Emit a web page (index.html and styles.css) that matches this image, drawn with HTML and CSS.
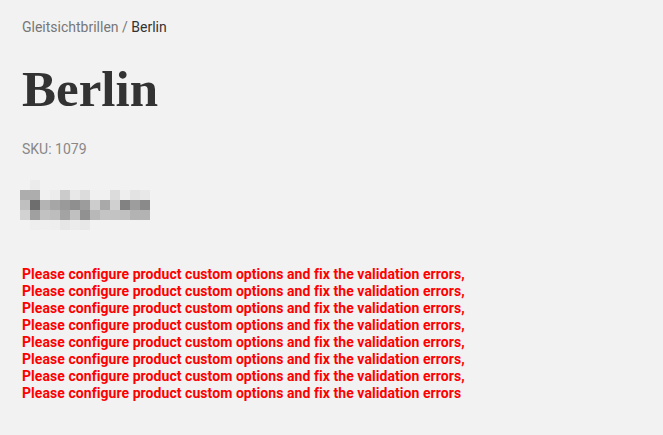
FILE: index.html
```html
<!DOCTYPE html>
<html lang="de">
<head>
    <meta charset="UTF-8">
    <title>Berlin</title>
    <link rel="stylesheet" href="styles.css">
</head>
<body>
    <div class="product">
        <p class="crumbs"><a href="#">Gleitsichtbrillen</a> / <span>Berlin</span></p>
        <h1 class="title">Berlin</h1>
        <p class="sku">SKU: 1079</p>
        <div class="thumb">
            <svg width="130" height="50" viewBox="0 0 130 50">
                <rect x="10" y="0" width="10" height="10" fill="#ebebeb"/>
                <rect x="0" y="10" width="10" height="10" fill="#adadad"/>
                <rect x="10" y="10" width="10" height="10" fill="#adadad"/>
                <rect x="20" y="10" width="10" height="10" fill="#f0f0f0"/>
                <rect x="30" y="10" width="10" height="10" fill="#ececec"/>
                <rect x="40" y="10" width="10" height="10" fill="#cbcbcb"/>
                <rect x="50" y="10" width="10" height="10" fill="#e8e8e8"/>
                <rect x="60" y="10" width="10" height="10" fill="#dcdcdc"/>
                <rect x="70" y="10" width="10" height="10" fill="#f0f0f0"/>
                <rect x="80" y="10" width="10" height="10" fill="#f0f0f0"/>
                <rect x="90" y="10" width="10" height="10" fill="#dcdcdc"/>
                <rect x="100" y="10" width="10" height="10" fill="#eeeeee"/>
                <rect x="110" y="10" width="10" height="10" fill="#e3e3e3"/>
                <rect x="120" y="10" width="10" height="10" fill="#e8e8e8"/>
                <rect x="0" y="20" width="10" height="10" fill="#c0c0c0"/>
                <rect x="10" y="20" width="10" height="10" fill="#6e6e6e"/>
                <rect x="20" y="20" width="10" height="10" fill="#b4b4b4"/>
                <rect x="30" y="20" width="10" height="10" fill="#a6a6a6"/>
                <rect x="40" y="20" width="10" height="10" fill="#9a9a9a"/>
                <rect x="50" y="20" width="10" height="10" fill="#8f8f8f"/>
                <rect x="60" y="20" width="10" height="10" fill="#9c9c9c"/>
                <rect x="70" y="20" width="10" height="10" fill="#cdcdcd"/>
                <rect x="80" y="20" width="10" height="10" fill="#a9a9a9"/>
                <rect x="90" y="20" width="10" height="10" fill="#d0d0d0"/>
                <rect x="100" y="20" width="10" height="10" fill="#828282"/>
                <rect x="110" y="20" width="10" height="10" fill="#9d9d9d"/>
                <rect x="120" y="20" width="10" height="10" fill="#8a8a8a"/>
                <rect x="0" y="30" width="10" height="10" fill="#d2d2d2"/>
                <rect x="10" y="30" width="10" height="10" fill="#a0a0a0"/>
                <rect x="20" y="30" width="10" height="10" fill="#c2c2c2"/>
                <rect x="30" y="30" width="10" height="10" fill="#bdbdbd"/>
                <rect x="40" y="30" width="10" height="10" fill="#a3a3a3"/>
                <rect x="50" y="30" width="10" height="10" fill="#c0c0c0"/>
                <rect x="60" y="30" width="10" height="10" fill="#919191"/>
                <rect x="70" y="30" width="10" height="10" fill="#b8b8b8"/>
                <rect x="80" y="30" width="10" height="10" fill="#c4c4c4"/>
                <rect x="90" y="30" width="10" height="10" fill="#c3c3c3"/>
                <rect x="100" y="30" width="10" height="10" fill="#c0c0c0"/>
                <rect x="110" y="30" width="10" height="10" fill="#b3b3b3"/>
                <rect x="120" y="30" width="10" height="10" fill="#b3b3b3"/>
                <rect x="10" y="40" width="10" height="10" fill="#eeeeee"/>
                <rect x="20" y="40" width="10" height="10" fill="#efefef"/>
                <rect x="30" y="40" width="10" height="10" fill="#eeeeee"/>
                <rect x="40" y="40" width="10" height="10" fill="#e6e6e6"/>
                <rect x="50" y="40" width="10" height="10" fill="#ececec"/>
                <rect x="60" y="40" width="10" height="10" fill="#e8e8e8"/>
            </svg>
        </div>
        <div class="errors">
            Please configure product custom options and fix the validation errors,<br>
            Please configure product custom options and fix the validation errors,<br>
            Please configure product custom options and fix the validation errors,<br>
            Please configure product custom options and fix the validation errors,<br>
            Please configure product custom options and fix the validation errors,<br>
            Please configure product custom options and fix the validation errors,<br>
            Please configure product custom options and fix the validation errors,<br>
            Please configure product custom options and fix the validation errors
        </div>
    </div>
</body>
</html>
```

FILE: styles.css
```css
*{
    margin: 0;
    padding: 0;
}
body{
    background: #f2f2f2;
    font-family: Roboto, "Liberation Sans", sans-serif;
    font-size: 14px;
    color: #333;
}
.product{
    padding: 17px 22px;
}
.crumbs{
    line-height: 20px;
    color: #777;
}
.crumbs a{
    color: #777;
    text-decoration: none;
}
.crumbs span{
    color: #333;
}
.title{
    margin-top: 21px;
    font-family: "Liberation Serif", "DejaVu Serif", serif;
    font-size: 51px;
    font-weight: bold;
    line-height: 62px;
    color: #333;
}
.sku{
    margin-top: 19px;
    line-height: 20px;
    color: #888;
}
.thumb{
    margin-top: 21px;
    margin-left: -2px;
    height: 50px;
}
.thumb svg{
    display: block;
}
.errors{
    margin-top: 36px;
    font-weight: bold;
    line-height: 17px;
    letter-spacing: 0.06px;
    color: #ff0000;
}
```
